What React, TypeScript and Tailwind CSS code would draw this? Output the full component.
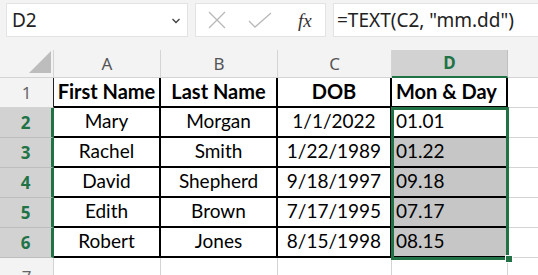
import React from 'react'

const cols = ['A', 'B', 'C', 'D']
const data = [
  ['First Name', 'Last Name', 'DOB', 'Mon & Day'],
  ['Mary', 'Morgan', '1/1/2022', '01.01'],
  ['Rachel', 'Smith', '1/22/1989', '01.22'],
  ['David', 'Shepherd', '9/18/1997', '09.18'],
  ['Edith', 'Brown', '7/17/1995', '07.17'],
  ['Robert', 'Jones', '8/15/1998', '08.15'],
]

const ui = { fontFamily: '"Noto Sans", "Open Sans", sans-serif' }
const body = { fontFamily: 'Lato, "Open Sans", sans-serif' }

export default function App() {
  return (
    <div className="relative w-[538px] h-[275px] overflow-hidden bg-white" style={ui}>
      {/* formula bar */}
      <div className="h-[50px] bg-[#f3f3f3] flex items-start pt-[3px] pl-[6px] gap-[7px]">
        <div className="w-[182px] h-[34px] bg-white border border-[#e3e3e3] flex items-center justify-between pl-[5px] pr-[6px]">
          <span className="text-[19px] text-[#222] leading-none">D2</span>
          <svg width="10" height="6" viewBox="0 0 10 6" className="mt-[1px]">
            <path d="M1.5 1l3.5 3.5L8.5 1" fill="none" stroke="#444" strokeWidth="1.4" />
          </svg>
        </div>
        <div className="w-[131px] h-[34px] bg-white border border-[#e3e3e3] flex items-center pl-[12px]">
          <svg width="18" height="18" viewBox="0 0 18 18">
            <path d="M1 1l16 16M17 1L1 17" stroke="#b9b9b9" strokeWidth="1.3" />
          </svg>
          <svg width="24" height="18" viewBox="0 0 24 18" className="ml-[22px]">
            <path d="M1 10l6 6L23 2" fill="none" stroke="#b9b9b9" strokeWidth="1.3" />
          </svg>
          <span
            className="ml-[26px] italic text-[19px] text-[#333] leading-none"
            style={{ fontFamily: '"Liberation Serif", serif' }}
          >
            fx
          </span>
        </div>
        <div className="flex-1 h-[34px] bg-white border border-[#e3e3e3] border-r-0 flex items-center pl-[3px]">
          <span className="text-[19px] text-[#222] leading-none whitespace-nowrap">=TEXT(C2, "mm.dd")</span>
        </div>
      </div>

      {/* sheet grid */}
      <div className="grid grid-cols-[54px_107px_117px_114px_116px_1fr] grid-rows-[28px_30px_30px_30px_30px_30px_30px_30px]">
        {/* corner */}
        <div className="bg-[#f3f3f3] border-r border-b border-[#d4d4d4] flex items-end justify-end pr-[2px] pb-[4px]">
          <svg width="22" height="22" viewBox="0 0 22 22">
            <path d="M22 0V22H0Z" fill="#bdbdbd" />
          </svg>
        </div>
        {cols.map((c) =>
          c === 'D' ? (
            <div
              key={c}
              className="bg-[#d2d2d2] border-b-[2px] border-b-[#217346] border-r border-r-[#c0c0c0] flex items-center justify-center text-[17px] font-bold text-[#217346]"
            >
              {c}
            </div>
          ) : (
            <div
              key={c}
              className="bg-[#f3f3f3] border-r border-b border-[#d4d4d4] flex items-center justify-center text-[17px] text-[#555]"
            >
              {c}
            </div>
          )
        )}
        <div className="bg-[#f3f3f3] border-b border-[#d4d4d4]" />

        {data.map((row, r) => (
          <React.Fragment key={r}>
            {r === 0 ? (
              <div className="bg-[#f3f3f3] border-r border-r-[#222] border-b border-b-[#d4d4d4] flex items-center justify-center text-[17px] text-[#666]">
                1
              </div>
            ) : (
              <div className="bg-[#d2d2d2] border-r-[3px] border-r-[#217346] border-b border-b-[#bdbdbd] flex items-center justify-center text-[17px] font-bold text-[#217346]">
                {r + 1}
              </div>
            )}
            {row.map((v, c) => {
              const isD = c === 3
              const bg = isD && r > 1 ? 'bg-[#c6c6c6]' : 'bg-white'
              return (
                <div
                  key={c}
                  className={`${bg} border-r-2 border-b-2 border-black flex items-end pb-[2px] leading-[26px] text-black whitespace-nowrap ${
                    isD ? 'justify-start pl-[4px]' : 'justify-center'
                  } ${r === 0 ? 'font-bold text-[20px]' : 'text-[19px]'}`}
                  style={body}
                >
                  {v}
                </div>
              )
            })}
            <div className="border-b border-[#d4d4d4]" />
          </React.Fragment>
        ))}

        {/* row 7 */}
        <div className="bg-[#f3f3f3] border-r border-[#d4d4d4] flex items-start justify-center pt-[6px] text-[17px] text-[#666]">
          7
        </div>
        <div className="border-r border-[#d4d4d4]" />
        <div className="border-r border-[#d4d4d4]" />
        <div className="border-r border-[#d4d4d4]" />
        <div className="border-r border-[#d4d4d4]" />
        <div />
      </div>

      {/* selection D2:D6 */}
      <div className="absolute left-[391px] top-[107px] w-[118px] h-[153px] border-[3px] border-[#217346] pointer-events-none" />
      <div className="absolute left-[505px] top-[255px] w-[8px] h-[8px] bg-[#217346] border border-white" />
    </div>
  )
}
